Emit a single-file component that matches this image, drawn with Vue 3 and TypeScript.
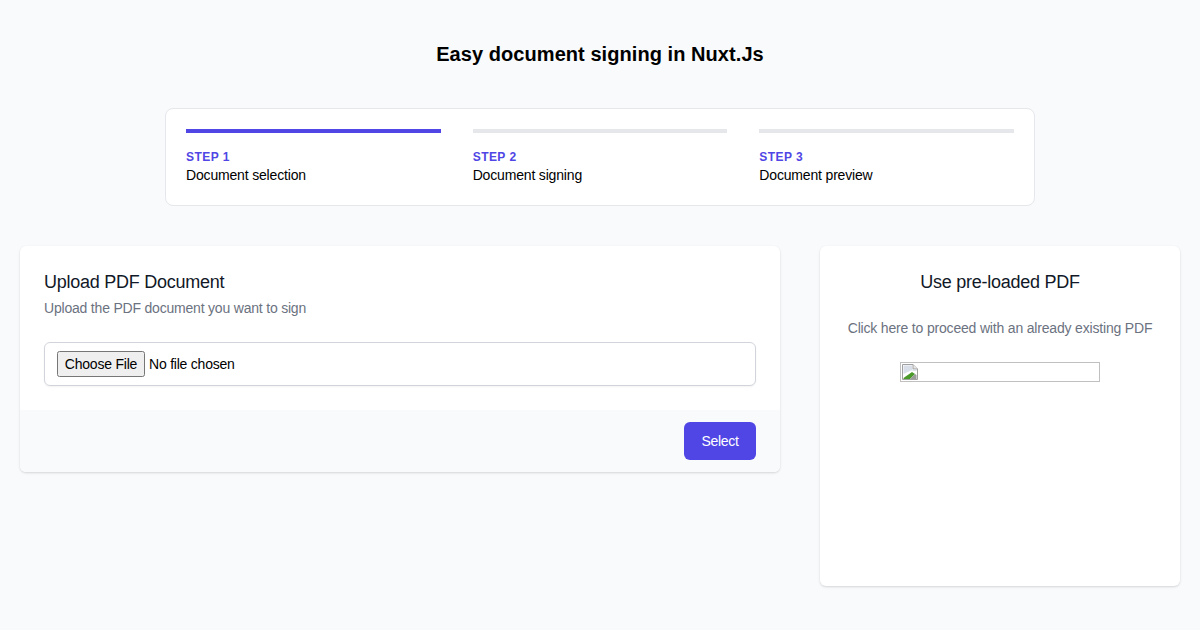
<script setup lang="ts">
const steps = [
  { label: 'STEP 1', name: 'Document selection', active: true },
  { label: 'STEP 2', name: 'Document signing', active: false },
  { label: 'STEP 3', name: 'Document preview', active: false },
]
</script>

<template>
  <div class="page">
    <h1 class="title">Easy document signing in Nuxt.Js</h1>
    <nav class="steps">
      <div v-for="s in steps" :key="s.label" class="step" :class="{ active: s.active }">
        <span class="step-label">{{ s.label }}</span>
        <span class="step-name">{{ s.name }}</span>
      </div>
    </nav>
    <div class="columns">
      <section class="card upload">
        <div class="upload-body">
          <h2 class="card-title">Upload PDF Document</h2>
          <p class="card-sub">Upload the PDF document you want to sign</p>
          <input class="file" type="file" />
        </div>
        <div class="upload-foot">
          <button class="select" type="button">Select</button>
        </div>
      </section>
      <section class="card preload">
        <h2 class="card-title">Use pre-loaded PDF</h2>
        <p class="preload-sub">Click here to proceed with an already existing PDF</p>
        <div class="broken">
          <svg width="16" height="16" viewBox="0 0 16 16">
            <path d="M0.5 0.5H11L15.5 5V15.5H0.5Z" fill="#fff" stroke="#a0a0a0" />
            <path d="M11 0.5V5H15.5" fill="#e8e8e8" stroke="#a0a0a0" />
            <path d="M1.5 1.5H10V5.5H14.5V7L9 6.5L1.5 10Z" fill="#d8dfe8" />
            <path d="M1.5 15L1.5 14L10 8L13 10L8 15Z" fill="#4a9a2a" />
            <path d="M8 15L13 10L14.5 11V15Z" fill="#9a9a9a" />
          </svg>
        </div>
      </section>
    </div>
  </div>
</template>

<style>
html, body { margin: 0; background: #f9fafb; }
</style>

<style scoped>
.page {
  width: 1200px;
  height: 630px;
  box-sizing: border-box;
  padding: 43px 20px 0;
  background: #f9fafb;
  font-family: "Liberation Sans", Arial, sans-serif;
  color: #000;
  overflow: hidden;
}
.title {
  margin: 0;
  font-size: 20px;
  line-height: 22px;
  font-weight: 700;
  letter-spacing: 0.06px;
  text-align: center;
}
.steps {
  width: 870px;
  box-sizing: border-box;
  margin: 43px auto 0;
  padding: 20px;
  display: flex;
  gap: 32px;
  background: #fff;
  border: 1px solid #e5e7eb;
  border-radius: 8px;
}
.step {
  flex: 1;
  display: flex;
  flex-direction: column;
  padding-top: 16px;
  border-top: 4px solid #e5e7eb;
}
.step.active { border-top-color: #4f46e5; }
.step-label {
  font-size: 12px;
  line-height: 16px;
  font-weight: 700;
  letter-spacing: 0.45px;
  color: #4f46e5;
}
.step-name {
  font-size: 14px;
  line-height: 20px;
  letter-spacing: -0.17px;
}
.columns {
  margin-top: 40px;
  display: grid;
  grid-template-columns: 760px 360px;
  gap: 40px;
  align-items: start;
}
.card {
  background: #fff;
  border-radius: 6px;
  box-shadow: 0 1px 3px rgba(0, 0, 0, 0.1), 0 1px 2px rgba(0, 0, 0, 0.06);
  overflow: hidden;
}
.upload-body { padding: 24px; }
.card-title {
  margin: 0;
  font-size: 18px;
  line-height: 24px;
  font-weight: 400;
  letter-spacing: -0.25px;
  color: #111827;
}
.card-sub {
  margin: 4px 0 0;
  font-size: 14px;
  line-height: 20px;
  letter-spacing: -0.2px;
  color: #6b7280;
}
.file {
  display: block;
  width: 100%;
  height: 44px;
  box-sizing: border-box;
  margin-top: 24px;
  padding: 8px 12px;
  font-family: inherit;
  font-size: 14px;
  letter-spacing: -0.22px;
  color: #000;
  background: #fff;
  border: 1px solid #d1d5db;
  border-radius: 6px;
  box-shadow: 0 1px 2px rgba(0, 0, 0, 0.05);
}
.file::file-selector-button {
  width: 88px;
  height: 26px;
  padding: 0;
  letter-spacing: -0.22px;
}
.upload-foot {
  display: flex;
  justify-content: flex-end;
  padding: 12px 24px;
  background: #f9fafb;
}
.select {
  width: 72px;
  height: 38px;
  padding: 0;
  font-family: inherit;
  font-size: 14px;
  letter-spacing: -0.3px;
  color: #fff;
  background: #4f46e5;
  border: none;
  border-radius: 6px;
}
.preload {
  height: 340px;
  box-sizing: border-box;
  padding: 24px;
  display: flex;
  flex-direction: column;
  align-items: center;
  text-align: center;
}
.preload-sub {
  margin: 24px 0 0;
  font-size: 14px;
  line-height: 20px;
  letter-spacing: -0.18px;
  color: #6b7280;
  white-space: nowrap;
}
.broken {
  width: 200px;
  height: 20px;
  box-sizing: border-box;
  margin-top: 24px;
  padding: 1px;
  border: 1px solid #c0c0c0;
  display: flex;
}
</style>
